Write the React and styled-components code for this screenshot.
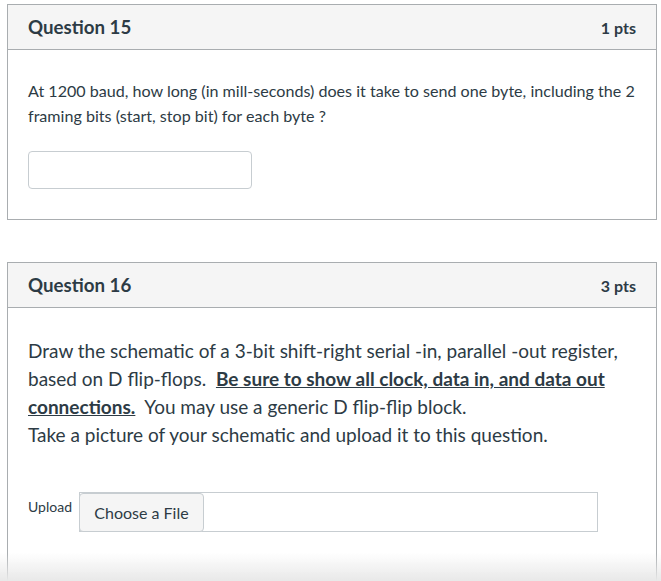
import React from 'react';
import styled, { createGlobalStyle } from 'styled-components';

const GlobalStyle = createGlobalStyle`
  body {
    margin: 0;
    background: #ffffff;
    font-family: Lato, "Helvetica Neue", Arial, sans-serif;
    color: #2d3b45;
  }
`;

const Page = styled.div`
  padding: 4px 4px 0 7px;
`;

const Card = styled.div`
  border: 1px solid #a9adb0;
  background: #fff;
  margin-bottom: ${(p) => p.$gap || 0}px;
`;

const Header = styled.div`
  display: flex;
  align-items: center;
  justify-content: space-between;
  height: 44px;
  padding: 0 20px 0 20px;
  background: #f5f5f5;
  border-bottom: 1px solid #a9adb0;
`;

const Title = styled.h2`
  margin: 0;
  font-size: 18.7px;
  font-weight: 700;
  color: #2d3b45;
`;

const Points = styled.span`
  font-size: 16px;
  font-weight: 700;
  color: #2d3b45;
`;

const Body = styled.div`
  padding: ${(p) => p.$pad};
`;

const Text = styled.p`
  margin: 0;
  font-size: ${(p) => p.$size}px;
  line-height: ${(p) => p.$lh}px;
  color: #2d3b45;
`;

const Strong = styled.strong`
  font-weight: 700;
  text-decoration: underline;
`;

const Answer = styled.input`
  display: block;
  box-sizing: border-box;
  width: 224px;
  height: 38px;
  margin-top: 23px;
  border: 1px solid #c7cdd1;
  border-radius: 4px;
  background: #fff;
  outline: none;
`;

const UploadRow = styled.div`
  display: flex;
  align-items: flex-start;
  gap: 7px;
  margin-top: 43px;
`;

const UploadLabel = styled.label`
  font-size: 14px;
  line-height: 18px;
  padding-top: 6px;
  color: #2d3b45;
`;

const FileBox = styled.div`
  display: flex;
  box-sizing: border-box;
  width: 519px;
  height: 40px;
  border: 1px solid #c7cdd1;
`;

const ChooseButton = styled.button`
  box-sizing: border-box;
  width: 125px;
  height: 39px;
  margin: 0 0 0 -1px;
  border: 1px solid #c7cdd1;
  border-radius: 4px;
  background: #f5f5f5;
  font-family: Lato, Arial, sans-serif;
  font-size: 16px;
  color: #2d3b45;
  padding: 0;
`;

const Fade = styled.div`
  position: fixed;
  left: 0;
  right: 0;
  bottom: 0;
  height: 28px;
  background: linear-gradient(to bottom, rgba(235, 235, 235, 0), rgba(232, 232, 232, 1));
  pointer-events: none;
`;

export default function App() {
  return (
    <>
      <GlobalStyle />
      <Page>
        <Card $gap={42}>
          <Header>
            <Title>Question 15</Title>
            <Points>1 pts</Points>
          </Header>
          <Body $pad="28px 10px 30px 20px">
            <Text $size={16.1} $lh={25}>
              At 1200 baud, how long (in mill-seconds) does it take to send one byte, including the 2
              framing bits (start, stop bit) for each byte ?
            </Text>
            <Answer type="text" />
          </Body>
        </Card>
        <Card>
          <Header>
            <Title>Question 16</Title>
            <Points>3 pts</Points>
          </Header>
          <Body $pad="29px 20px 60px 20px">
            <Text $size={19} $lh={28}>
              Draw the schematic of a 3-bit shift-right serial -in, parallel -out register,
              based on D flip-flops.&nbsp; <Strong>Be sure to show all clock, data in, and data out
              connections.</Strong>&nbsp; You may use a generic D flip-flip block.
              <br />
              Take a picture of your schematic and upload it to this question.
            </Text>
            <UploadRow>
              <UploadLabel>Upload</UploadLabel>
              <FileBox>
                <ChooseButton type="button">Choose a File</ChooseButton>
              </FileBox>
            </UploadRow>
          </Body>
        </Card>
      </Page>
      <Fade />
    </>
  );
}
